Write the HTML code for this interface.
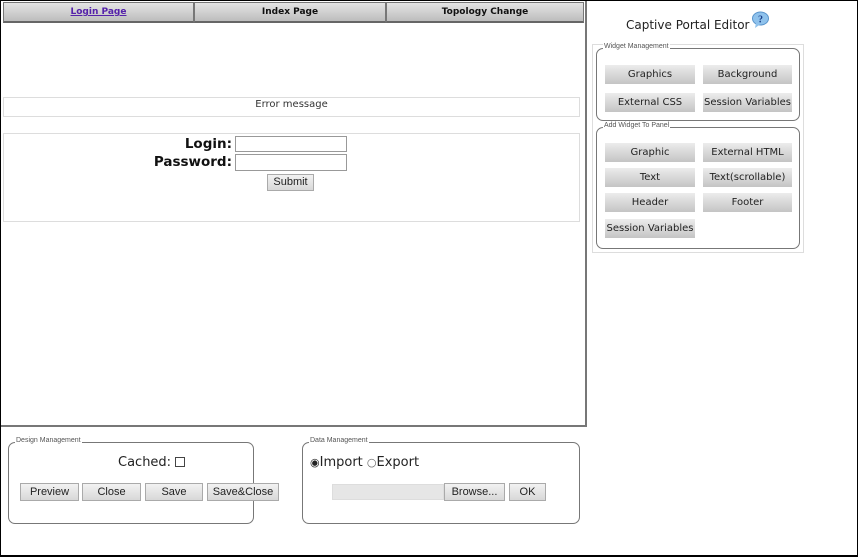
<!DOCTYPE html>
<html><head><style>
*{margin:0;padding:0;box-sizing:border-box}
body{width:858px;height:557px;position:relative;background:#fff;font-family:"DejaVu Sans",Verdana,sans-serif;overflow:hidden}
.a{position:absolute}
.frame{left:0;top:0;width:858px;height:557px;border:1px solid #000;border-bottom-width:2px}
.main{left:1px;top:1px;width:586px;height:426px;border-right:2px solid #777;border-bottom:2px solid #777}
.tab{top:2px;height:21px;background:linear-gradient(#e4e4e4,#bdbdbd);border:1px solid #777;border-bottom:2px solid #666;font-size:9px;font-weight:bold;text-align:center;line-height:19px;color:#111}
.box{border:1px solid #ddd}
.btn{position:absolute;height:19px;background:linear-gradient(#ececec,#c4c4c4);font-size:10px;text-align:center;line-height:19px;color:#222}
.fs{position:absolute;border:1px solid #777;border-radius:7px}
.lg{position:absolute;top:-6px;left:6px;background:#fff;font-size:7px;color:#555;padding:0 1px;font-family:"Liberation Sans",Arial,sans-serif}
.gb{position:absolute;height:18px;border:1px solid #aaa;background:linear-gradient(#f2f2f2,#d8d8d8);font-family:"Liberation Sans",Arial,sans-serif;font-size:11px;text-align:center;line-height:16px;color:#222}
input{position:absolute;border:1px solid #999;background:#fff}
</style></head><body>
<div class="a frame"></div>
<div class="a main"></div>
<div class="a tab" style="left:3px;width:191px"><span style="color:#5522aa;text-decoration:underline">Login Page</span></div>
<div class="a tab" style="left:194px;width:192px">Index Page</div>
<div class="a tab" style="left:386px;width:198px">Topology Change</div>
<div class="a box" style="left:3px;top:97px;width:577px;height:20px;font-size:10px;text-align:center;line-height:13px;color:#333">Error message</div>
<div class="a box" style="left:3px;top:133px;width:577px;height:89px"></div>
<div class="a" style="left:100px;top:135px;width:132px;text-align:right;font:bold 13.5px 'DejaVu Sans',sans-serif;line-height:18px;color:#111">Login:<br>Password:</div>
<input style="left:235px;top:136px;width:112px;height:16px">
<input style="left:235px;top:154px;width:112px;height:17px">
<div class="gb" style="left:267px;top:174px;width:47px;height:17px;line-height:15px">Submit</div>

<div class="a" style="left:626px;top:18px;font-size:12px;color:#222;white-space:nowrap">Captive Portal Editor</div>
<svg class="a" style="left:751px;top:11px" width="19" height="18" viewBox="0 0 19 18"><ellipse cx="9.5" cy="7.5" rx="8" ry="6.5" fill="#8fc2ec" stroke="#5a95cc"/><path d="M5 12 L4 17 L9 13.5Z" fill="#8fc2ec"/><text x="9.5" y="11.5" font-size="10" font-weight="bold" text-anchor="middle" fill="#1a3f8a" font-family="Liberation Serif,serif">?</text></svg>
<div class="a box" style="left:592px;top:44px;width:212px;height:209px"></div>
<div class="fs" style="left:596px;top:48px;width:204px;height:73px"><span class="lg">Widget Management</span></div>
<div class="btn" style="left:605px;top:65px;width:90px">Graphics</div>
<div class="btn" style="left:703px;top:65px;width:89px">Background</div>
<div class="btn" style="left:605px;top:93px;width:90px">External CSS</div>
<div class="btn" style="left:703px;top:93px;width:89px">Session Variables</div>
<div class="fs" style="left:596px;top:127px;width:204px;height:122px"><span class="lg">Add Widget To Panel</span></div>
<div class="btn" style="left:605px;top:143px;width:90px">Graphic</div>
<div class="btn" style="left:703px;top:143px;width:89px">External HTML</div>
<div class="btn" style="left:605px;top:168px;width:90px">Text</div>
<div class="btn" style="left:703px;top:168px;width:89px">Text(scrollable)</div>
<div class="btn" style="left:605px;top:193px;width:90px">Header</div>
<div class="btn" style="left:703px;top:193px;width:89px">Footer</div>
<div class="btn" style="left:605px;top:219px;width:90px">Session Variables</div>

<div class="fs" style="left:8px;top:442px;width:246px;height:82px"><span class="lg">Design Management</span></div>
<div class="a" style="left:118px;top:455px;font-size:13px;color:#222">Cached: <span style="display:inline-block;width:10px;height:10px;border:1px solid #444;vertical-align:-1px"></span></div>
<div class="gb" style="left:20px;top:483px;width:59px">Preview</div>
<div class="gb" style="left:82px;top:483px;width:59px">Close</div>
<div class="gb" style="left:145px;top:483px;width:58px">Save</div>
<div class="gb" style="left:207px;top:483px;width:72px">Save&amp;Close</div>
<div class="fs" style="left:302px;top:442px;width:278px;height:82px"><span class="lg">Data Management</span></div>
<div class="a" style="left:310px;top:455px;font-size:13px;color:#222"><span style="font-size:11px">◉</span>Import <span style="font-size:11px;color:#666">○</span>Export</div>
<div class="a" style="left:332px;top:484px;width:112px;height:16px;background:#e6e6e6;border:1px solid #ddd"></div>
<div class="gb" style="left:444px;top:483px;width:61px">Browse...</div>
<div class="gb" style="left:509px;top:483px;width:37px">OK</div>
</body></html>
